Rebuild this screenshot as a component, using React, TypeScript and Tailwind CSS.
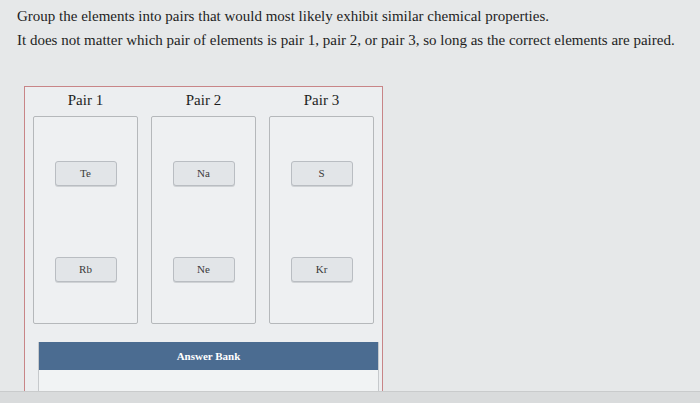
const PAIRS = [
  { label: "Pair 1", items: ["Te", "Rb"] },
  { label: "Pair 2", items: ["Na", "Ne"] },
  { label: "Pair 3", items: ["S", "Kr"] },
];

function Chip({ text }: { text: string }) {
  return (
    <div className="w-[62px] h-[25px] flex items-center justify-center rounded-[3px] border border-[#b9bdc2] bg-[#e2e5e8] text-[11px] text-[#3a3a3a] shadow-[0_1px_0_#cfd2d5]">
      {text}
    </div>
  );
}

export default function App() {
  return (
    <div className="w-[700px] h-[403px] overflow-hidden bg-[#e6e8e9] flex flex-col text-[#1e1e1e] font-['Liberation_Serif','Times_New_Roman',serif]">
      {/* Prompt */}
      <div className="pl-[17px] pt-[4px] text-[15px] leading-[24px]">
        <p>Group the elements into pairs that would most likely exhibit similar chemical properties.</p>
        <p>It does not matter which pair of elements is pair 1, pair 2, or pair 3, so long as the correct elements are paired.</p>
      </div>

      <div className="flex-1 flex flex-col mt-[34px]">
        <div className="flex-1 flex">
          {/* Drag-and-drop panel */}
          <div className="ml-[24px] w-[359px] border border-b-0 border-[#c88587] bg-[#eceef0] flex flex-col">
            <div className="grid grid-cols-3 gap-[13px] px-[8px]">
              {PAIRS.map((p) => (
                <div key={p.label} className="flex flex-col items-center">
                  <div className="h-[29px] pt-[4px] text-[15px] leading-[18px]">{p.label}</div>
                  <div className="w-full h-[208px] border border-[#b5b8bb] rounded-[2px] bg-[#eef0f2] flex flex-col items-center pt-[44px] gap-[71px]">
                    {p.items.map((it) => (
                      <Chip key={it} text={it} />
                    ))}
                  </div>
                </div>
              ))}
            </div>

            {/* Answer bank */}
            <div className="mt-[18px] ml-[13px] mr-[3px] flex-1 flex flex-col border-x border-[#c6c9cc]">
              <div className="h-[28px] bg-[#4b6c91] flex items-center justify-center text-white text-[11px] font-bold">
                Answer Bank
              </div>
              <div className="flex-1 bg-[#f1f3f4]" />
            </div>
          </div>
        </div>
        <div className="h-[12px] bg-[#d9dbdc] border-t border-[#c9cbcc]" />
      </div>
    </div>
  );
}
